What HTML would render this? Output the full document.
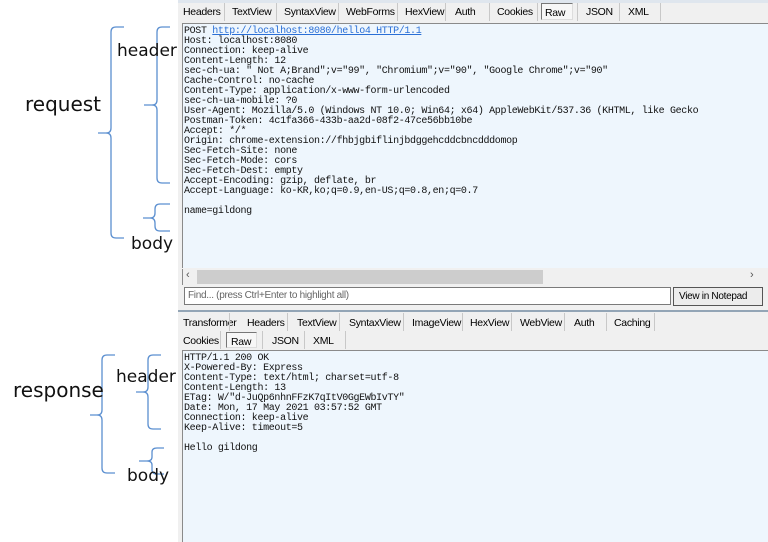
<!DOCTYPE html>
<html><head><style>
*{margin:0;padding:0;box-sizing:border-box}
body{width:768px;height:542px;background:#fff;position:relative;overflow:hidden;font-family:"Liberation Sans",sans-serif}
.a{position:absolute}
.tab{position:absolute;font-size:10.5px;color:#000;letter-spacing:-0.3px;white-space:nowrap}
.sep{position:absolute;width:1px;background:#c8c8c8}
.lbl{position:absolute;font-family:"DejaVu Sans","Liberation Sans",sans-serif;color:#111;white-space:nowrap}
pre{position:absolute;font-family:"Liberation Mono",monospace;font-size:10px;letter-spacing:-0.35px;line-height:10px;color:#111;white-space:pre}
.raw{position:absolute;border:1px solid #777;background:#f7f7f7;border-right-color:#ddd;border-bottom-color:#ddd}
</style></head><body>
<div class="a" style="left:178px;top:0;width:590px;height:542px;background:#f0f0f0"></div>
<div class="a" style="left:178px;top:0;width:590px;height:3px;background:#dfe6ee"></div>
<div class="tab" style="left:183px;top:6px">Headers</div>
<div class="sep" style="left:224px;top:3px;height:18px"></div>
<div class="tab" style="left:232px;top:6px">TextView</div>
<div class="sep" style="left:276px;top:3px;height:18px"></div>
<div class="tab" style="left:284px;top:6px">SyntaxView</div>
<div class="sep" style="left:338px;top:3px;height:18px"></div>
<div class="tab" style="left:346px;top:6px">WebForms</div>
<div class="sep" style="left:397px;top:3px;height:18px"></div>
<div class="tab" style="left:405px;top:6px">HexView</div>
<div class="sep" style="left:445px;top:3px;height:18px"></div>
<div class="tab" style="left:455px;top:6px">Auth</div>
<div class="sep" style="left:489px;top:3px;height:18px"></div>
<div class="tab" style="left:497px;top:6px">Cookies</div>
<div class="sep" style="left:537px;top:3px;height:18px"></div>
<div class="raw" style="left:541px;top:3px;width:32px;height:17px"></div>
<div class="tab" style="left:545px;top:7px">Raw</div>
<div class="sep" style="left:577px;top:3px;height:18px"></div>
<div class="tab" style="left:586px;top:6px">JSON</div>
<div class="sep" style="left:619px;top:3px;height:18px"></div>
<div class="tab" style="left:628px;top:6px">XML</div>
<div class="sep" style="left:660px;top:3px;height:18px"></div>
<div class="a" style="left:182px;top:23px;width:586px;height:245px;background:#eef6fd;border:1px solid #8a8a8a;border-right:none;border-bottom:none"></div>
<pre style="left:184px;top:27px">POST <span style="color:#2a6fd6;text-decoration:underline">http://localhost:8080/hello4 HTTP/1.1</span>
Host: localhost:8080
Connection: keep-alive
Content-Length: 12
sec-ch-ua: " Not A;Brand";v="99", "Chromium";v="90", "Google Chrome";v="90"
Cache-Control: no-cache
Content-Type: application/x-www-form-urlencoded
sec-ch-ua-mobile: ?0
User-Agent: Mozilla/5.0 (Windows NT 10.0; Win64; x64) AppleWebKit/537.36 (KHTML, like Gecko
Postman-Token: 4c1fa366-433b-aa2d-08f2-47ce56bb10be
Accept: */*
Origin: chrome-extension://fhbjgbiflinjbdggehcddcbncdddomop
Sec-Fetch-Site: none
Sec-Fetch-Mode: cors
Sec-Fetch-Dest: empty
Accept-Encoding: gzip, deflate, br
Accept-Language: ko-KR,ko;q=0.9,en-US;q=0.8,en;q=0.7

name=gildong</pre>
<div class="a" style="left:182px;top:269px;width:586px;height:16px;background:#f0f0f0;border-left:1px solid #8a8a8a"></div>
<div class="a" style="left:197px;top:270px;width:346px;height:14px;background:#cdcdcd"></div>
<div class="a" style="left:186px;top:269px;font-size:11px;color:#555">&lsaquo;</div>
<div class="a" style="left:750px;top:269px;font-size:11px;color:#555">&rsaquo;</div>
<div class="a" style="left:184px;top:287px;width:487px;height:18px;background:#fff;border:1px solid #7a7a7a"></div>
<div class="tab" style="left:188px;top:290px;color:#666;font-size:10px">Find... (press Ctrl+Enter to highlight all)</div>
<div class="a" style="left:673px;top:287px;width:90px;height:19px;background:#ececec;border:1px solid #555"></div>
<div class="tab" style="left:679px;top:291px;font-size:10px">View in Notepad</div>
<div class="a" style="left:178px;top:310px;width:590px;height:2px;background:#93a5b6"></div>
<div class="tab" style="left:183px;top:317px">Transformer</div>
<div class="sep" style="left:229px;top:313px;height:18px"></div>
<div class="tab" style="left:247px;top:317px">Headers</div>
<div class="sep" style="left:287px;top:313px;height:18px"></div>
<div class="tab" style="left:297px;top:317px">TextView</div>
<div class="sep" style="left:339px;top:313px;height:18px"></div>
<div class="tab" style="left:349px;top:317px">SyntaxView</div>
<div class="sep" style="left:403px;top:313px;height:18px"></div>
<div class="tab" style="left:412px;top:317px">ImageView</div>
<div class="sep" style="left:462px;top:313px;height:18px"></div>
<div class="tab" style="left:470px;top:317px">HexView</div>
<div class="sep" style="left:511px;top:313px;height:18px"></div>
<div class="tab" style="left:520px;top:317px">WebView</div>
<div class="sep" style="left:564px;top:313px;height:18px"></div>
<div class="tab" style="left:574px;top:317px">Auth</div>
<div class="sep" style="left:606px;top:313px;height:18px"></div>
<div class="tab" style="left:614px;top:317px">Caching</div>
<div class="sep" style="left:654px;top:313px;height:18px"></div>
<div class="tab" style="left:183px;top:335px">Cookies</div>
<div class="sep" style="left:220px;top:331px;height:18px"></div>
<div class="raw" style="left:226px;top:332px;width:31px;height:16px"></div>
<div class="tab" style="left:231px;top:336px">Raw</div>
<div class="sep" style="left:262px;top:331px;height:18px"></div>
<div class="tab" style="left:272px;top:335px">JSON</div>
<div class="sep" style="left:304px;top:331px;height:18px"></div>
<div class="tab" style="left:313px;top:335px">XML</div>
<div class="sep" style="left:345px;top:331px;height:18px"></div>
<div class="a" style="left:182px;top:350px;width:586px;height:192px;background:#eef6fd;border:1px solid #8a8a8a;border-right:none;border-bottom:none"></div>
<pre style="left:184px;top:354px">HTTP/1.1 200 OK
X-Powered-By: Express
Content-Type: text/html; charset=utf-8
Content-Length: 13
ETag: W/"d-JuQp6nhnFFzK7qItV0GgEWbIvTY"
Date: Mon, 17 May 2021 03:57:52 GMT
Connection: keep-alive
Keep-Alive: timeout=5

Hello gildong</pre>
<svg class="a" style="left:0;top:0" width="182" height="542" fill="none" stroke="#5b8fd0" stroke-width="1.3">
<path d="M124 27 H116 Q111 27 111 32 V128 Q111 133 106 133 H98 M106 133 Q111 133 111 138 V233 Q111 238 116 238 H124"/>
<path d="M170 27 H162 Q157 27 157 32 V100 Q157 105 152 105 H144 M152 105 Q157 105 157 110 V178 Q157 183 162 183 H170"/>
<path d="M170 204 H160 Q155 204 155 209 V213 Q155 218 150 218 H143 M150 218 Q155 218 155 223 V226 Q155 231 160 231 H170"/>
<path d="M115 355 H107 Q102 355 102 360 V410 Q102 415 97 415 H90 M97 415 Q102 415 102 420 V468 Q102 473 107 473 H115"/>
<path d="M161 355 H153 Q148 355 148 360 V387 Q148 392 143 392 H136 M143 392 Q148 392 148 397 V424 Q148 429 153 429 H161"/>
<path d="M164 448 H157 Q152 448 152 452 V457 Q152 461 147 461 H139 M147 461 Q152 461 152 465 V470 Q152 474 157 474 H164"/>
</svg>
<div class="lbl" style="left:25px;top:92px;font-size:20px">request</div>
<div class="lbl" style="left:117px;top:41px;font-size:17px">header</div>
<div class="lbl" style="left:131px;top:234px;font-size:17px">body</div>
<div class="lbl" style="left:13px;top:378px;font-size:20px">response</div>
<div class="lbl" style="left:116px;top:367px;font-size:17px">header</div>
<div class="lbl" style="left:127px;top:466px;font-size:17px">body</div>
</body></html>
